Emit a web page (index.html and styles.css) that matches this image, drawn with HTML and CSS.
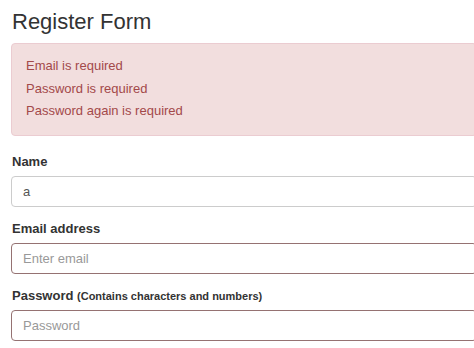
FILE: index.html
```html
<!DOCTYPE html>
<html lang="en">
<head>
<meta charset="utf-8">
<title>Register Form</title>
<link rel="stylesheet" href="styles.css">
</head>
<body>
<div class="page">
  <h3 class="title">Register Form</h3>
  <div class="alert">
    <div class="alert-line">Email is required</div>
    <div class="alert-line">Password is required</div>
    <div class="alert-line">Password again is required</div>
  </div>
  <form class="form">
    <div class="group">
      <label class="label" for="name">Name</label>
      <input class="input" id="name" type="text" value="a">
    </div>
    <div class="group">
      <label class="label" for="email">Email address</label>
      <input class="input input-error" id="email" type="email" placeholder="Enter email">
    </div>
    <div class="group">
      <label class="label" for="password">Password <small class="hint">(Contains characters and numbers)</small></label>
      <input class="input input-error" id="password" type="password" placeholder="Password">
    </div>
  </form>
</div>
</body>
</html>
```
FILE: styles.css
```css
html, body {
  margin: 0;
  padding: 0;
  overflow: hidden;
  background: #ffffff;
}

body {
  font-family: "Liberation Sans", Arial, sans-serif;
  font-size: 13px;
  color: #333333;
}

.page {
  width: 466px;
  padding-left: 11px;
}

.title {
  margin: 9px 0 8px 1px;
  font-size: 22px;
  line-height: 26px;
  font-weight: normal;
  color: #333333;
}

.alert {
  background: #f2dede;
  border: 1px solid #ebccd1;
  border-radius: 4px;
  padding: 11px 14px 12px 14px;
  color: #a3494a;
  font-size: 13px;
  line-height: 22.5px;
}

.form {
  margin-top: 17px;
}

.group {
  display: flex;
  flex-direction: column;
  margin-bottom: 13px;
}

.label {
  font-weight: bold;
  font-size: 13px;
  line-height: 18px;
  margin: 0 0 5px 1px;
  color: #333333;
}

.hint {
  font-size: 11px;
  font-weight: bold;
}

.input {
  box-sizing: border-box;
  width: 100%;
  height: 31px;
  margin: 0;
  padding: 0 11px;
  border: 1px solid #cccccc;
  border-radius: 4px;
  font-family: "Liberation Sans", Arial, sans-serif;
  font-size: 13px;
  color: #555555;
  background: #ffffff;
  outline: none;
}

.input::placeholder {
  color: #999999;
}

.input-error {
  border-color: #957272;
}
```
